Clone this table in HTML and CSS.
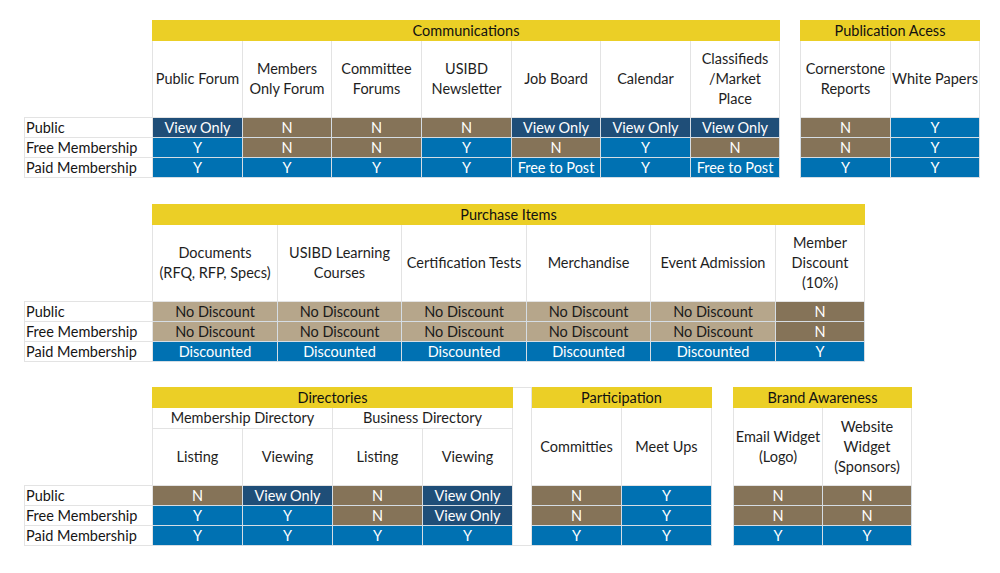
FILE: index.html
```html
<!DOCTYPE html>
<html lang="en">
<head>
<meta charset="utf-8">
<title>Membership Benefits</title>
<link rel="stylesheet" href="styles.css">
</head>
<body>
<div class="page">
  <section class="band band-1">
    <table class="grid t-comm">
      <colgroup><col class="w128"><col class="w90"><col class="w89"><col class="w90"><col class="w90"><col class="w89"><col class="w90"><col class="w89"></colgroup>
      <tr class="r-top"><td class="blank"></td><th class="yellow" colspan="7">Communications</th></tr>
      <tr class="r-head"><td class="blank"></td>
        <th class="head">Public Forum</th>
        <th class="head">Members<br>Only Forum</th>
        <th class="head">Committee<br>Forums</th>
        <th class="head">USIBD<br>Newsletter</th>
        <th class="head">Job Board</th>
        <th class="head">Calendar</th>
        <th class="head">Classifieds<br>/Market<br>Place</th>
      </tr>
      <tr class="r-data"><td class="label">Public</td><td class="vo">View Only</td><td class="n">N</td><td class="n">N</td><td class="n">N</td><td class="vo">View Only</td><td class="vo">View Only</td><td class="vo">View Only</td></tr>
      <tr class="r-data"><td class="label">Free Membership</td><td class="y">Y</td><td class="n">N</td><td class="n">N</td><td class="y">Y</td><td class="n">N</td><td class="y">Y</td><td class="n">N</td></tr>
      <tr class="r-data"><td class="label">Paid Membership</td><td class="y">Y</td><td class="y">Y</td><td class="y">Y</td><td class="y">Y</td><td class="y">Free to Post</td><td class="y">Y</td><td class="y">Free to Post</td></tr>
    </table>
    <table class="grid t-pub">
      <colgroup><col class="w90"><col class="w89"></colgroup>
      <tr class="r-top"><th class="yellow" colspan="2">Publication Acess</th></tr>
      <tr class="r-head"><th class="head clip">Cornerstone<br>Reports</th><th class="head">White Papers</th></tr>
      <tr class="r-data"><td class="n">N</td><td class="y">Y</td></tr>
      <tr class="r-data"><td class="n">N</td><td class="y">Y</td></tr>
      <tr class="r-data"><td class="y">Y</td><td class="y">Y</td></tr>
    </table>
  </section>

  <section class="band band-2">
    <table class="grid t-purchase">
      <colgroup><col class="w128"><col class="w125"><col class="w124"><col class="w125"><col class="w124"><col class="w125"><col class="w89"></colgroup>
      <tr class="r-top"><td class="blank"></td><th class="yellow" colspan="6">Purchase Items</th></tr>
      <tr class="r-head"><td class="blank"></td>
        <th class="head">Documents<br>(RFQ, RFP, Specs)</th>
        <th class="head">USIBD Learning<br>Courses</th>
        <th class="head">Certification Tests</th>
        <th class="head">Merchandise</th>
        <th class="head">Event Admission</th>
        <th class="head">Member<br>Discount<br>(10%)</th>
      </tr>
      <tr class="r-data"><td class="label">Public</td><td class="nd">No Discount</td><td class="nd">No Discount</td><td class="nd">No Discount</td><td class="nd">No Discount</td><td class="nd">No Discount</td><td class="n">N</td></tr>
      <tr class="r-data"><td class="label">Free Membership</td><td class="nd">No Discount</td><td class="nd">No Discount</td><td class="nd">No Discount</td><td class="nd">No Discount</td><td class="nd">No Discount</td><td class="n">N</td></tr>
      <tr class="r-data"><td class="label">Paid Membership</td><td class="y">Discounted</td><td class="y">Discounted</td><td class="y">Discounted</td><td class="y">Discounted</td><td class="y">Discounted</td><td class="y">Y</td></tr>
    </table>
  </section>

  <section class="band band-3">
    <table class="grid t-dir">
      <colgroup><col class="w128"><col class="w90"><col class="w90"><col class="w90"><col class="w90"><col class="w20"><col class="w90"><col class="w90"></colgroup>
      <tr class="r-top"><td class="blank"></td><th class="yellow" colspan="4">Directories</th><td class="strip" rowspan="6"></td><th class="yellow" colspan="2">Participation</th></tr>
      <tr class="r-sub"><td class="blank"></td>
        <th class="head" colspan="2">Membership Directory</th>
        <th class="head" colspan="2">Business Directory</th>
        <th class="head" rowspan="2">Committies</th>
        <th class="head" rowspan="2">Meet Ups</th>
      </tr>
      <tr class="r-head2"><td class="blank"></td>
        <th class="head">Listing</th><th class="head">Viewing</th><th class="head">Listing</th><th class="head">Viewing</th>
      </tr>
      <tr class="r-data"><td class="label">Public</td><td class="n">N</td><td class="vo">View Only</td><td class="n">N</td><td class="vo">View Only</td><td class="n">N</td><td class="y">Y</td></tr>
      <tr class="r-data"><td class="label">Free Membership</td><td class="y">Y</td><td class="y">Y</td><td class="n">N</td><td class="vo">View Only</td><td class="n">N</td><td class="y">Y</td></tr>
      <tr class="r-data"><td class="label">Paid Membership</td><td class="y">Y</td><td class="y">Y</td><td class="y">Y</td><td class="y">Y</td><td class="y">Y</td><td class="y">Y</td></tr>
    </table>
    <table class="grid t-brand">
      <colgroup><col class="w89"><col class="w89"></colgroup>
      <tr class="r-top"><th class="yellow" colspan="2">Brand Awareness</th></tr>
      <tr class="r-headb"><th class="head">Email Widget<br>(Logo)</th><th class="head">Website<br>Widget<br>(Sponsors)</th></tr>
      <tr class="r-data"><td class="n">N</td><td class="n">N</td></tr>
      <tr class="r-data"><td class="n">N</td><td class="n">N</td></tr>
      <tr class="r-data"><td class="y">Y</td><td class="y">Y</td></tr>
    </table>
  </section>
</div>
</body>
</html>
```

FILE: styles.css
```css
html, body {
  margin: 0;
  padding: 0;
  background: #ffffff;
}

body {
  font-family: Lato, "Open Sans", "Liberation Sans", sans-serif;
  font-size: 14.5px;
  color: #1b1b1b;
}

.page {
  width: 1000px;
  height: 573px;
  padding: 20px 0 0 24px;
  box-sizing: border-box;
  display: flex;
  flex-direction: column;
  gap: 26px;
}

.band {
  display: flex;
  align-items: flex-start;
  gap: 20px;
}

.band-3 {
  margin-top: -1px;
  gap: 21px;
}

.grid {
  border-collapse: collapse;
  table-layout: fixed;
}

.grid th,
.grid td {
  padding: 0;
  font-weight: normal;
  text-align: center;
  vertical-align: middle;
  line-height: 19px;
  white-space: nowrap;
  overflow: hidden;
}

.grid .head {
  line-height: 20px;
}

.w128 { width: 128px; }
.w125 { width: 125px; }
.w124 { width: 124px; }
.w90 { width: 90px; }
.w89 { width: 89px; }
.w20 { width: 19px; }

.r-top { height: 20px; }
.r-head { height: 77px; }
.r-sub { height: 21px; }
.r-head2 { height: 57px; }
.r-headb { height: 78px; }
.r-data { height: 20px; }

.blank {
  border: none;
}

.yellow {
  background: #ebcf26;
  color: #111;
  border: 1px solid #ebcf26;
}

.head {
  background: #ffffff;
  color: #1e1e1e;
  border: 1px solid #e3e3e3;
}

.clip {
  text-overflow: clip;
}

.label {
  text-align: left !important;
  padding-left: 1px !important;
  color: #151515;
  border: 1px solid #e3e3e3;
}

.vo,
.n,
.y,
.nd {
  border: 1px solid #d5dde4;
}

.vo {
  background: #1f4e78;
  color: #ffffff;
}

.n {
  background: #857358;
  color: #ffffff;
}

.y {
  background: #0071b2;
  color: #ffffff;
}

.nd {
  background: #b6a68b;
  color: #1a1a1a;
}

.strip {
  background: #ffffff;
  border: 1px solid #e3e3e3;
}
```
